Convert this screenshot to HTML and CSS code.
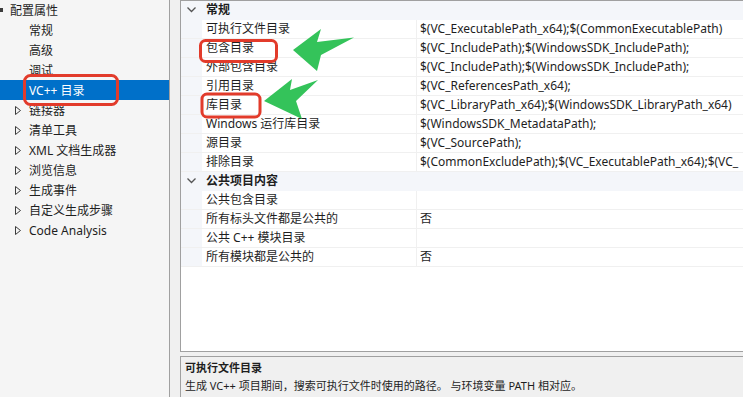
FILE: index.html
```html
<!DOCTYPE html>
<html>
<head>
    <title>VC++ 目录</title>
    <link rel="stylesheet" href="styles.css">
</head>
<body>
    <div class="layout">
        <div class="tree">
            <div class="node root"><span class="open-mark"></span>配置属性</div>
            <div class="node leaf">常规</div>
            <div class="node leaf">高级</div>
            <div class="node leaf">调试</div>
            <div class="node leaf sel">VC++ 目录</div>
            <div class="node"><svg class="twist" width="6" height="9" viewBox="0 0 6 9"><polygon points="0.5,0.5 5.5,4.5 0.5,8.5" /></svg>链接器</div>
            <div class="node"><svg class="twist" width="6" height="9" viewBox="0 0 6 9"><polygon points="0.5,0.5 5.5,4.5 0.5,8.5" /></svg>清单工具</div>
            <div class="node"><svg class="twist" width="6" height="9" viewBox="0 0 6 9"><polygon points="0.5,0.5 5.5,4.5 0.5,8.5" /></svg>XML 文档生成器</div>
            <div class="node"><svg class="twist" width="6" height="9" viewBox="0 0 6 9"><polygon points="0.5,0.5 5.5,4.5 0.5,8.5" /></svg>浏览信息</div>
            <div class="node"><svg class="twist" width="6" height="9" viewBox="0 0 6 9"><polygon points="0.5,0.5 5.5,4.5 0.5,8.5" /></svg>生成事件</div>
            <div class="node"><svg class="twist" width="6" height="9" viewBox="0 0 6 9"><polygon points="0.5,0.5 5.5,4.5 0.5,8.5" /></svg>自定义生成步骤</div>
            <div class="node"><svg class="twist" width="6" height="9" viewBox="0 0 6 9"><polygon points="0.5,0.5 5.5,4.5 0.5,8.5" /></svg>Code Analysis</div>
        </div>

        <div class="main">
            <div class="grid">
                <div class="row cat">
                    <span class="gut"><svg width="9" height="6" viewBox="0 0 9 6"><polyline points="0.5,0.5 4.5,4.5 8.5,0.5" /></svg></span>
                    <span class="name">常规</span>
                </div>
                <div class="row"><span class="gut"></span><span class="name">可执行文件目录</span><span class="val">$(VC_ExecutablePath_x64);$(CommonExecutablePath)</span></div>
                <div class="row"><span class="gut"></span><span class="name">包含目录</span><span class="val">$(VC_IncludePath);$(WindowsSDK_IncludePath);</span></div>
                <div class="row"><span class="gut"></span><span class="name">外部包含目录</span><span class="val">$(VC_IncludePath);$(WindowsSDK_IncludePath);</span></div>
                <div class="row"><span class="gut"></span><span class="name">引用目录</span><span class="val">$(VC_ReferencesPath_x64);</span></div>
                <div class="row"><span class="gut"></span><span class="name">库目录</span><span class="val">$(VC_LibraryPath_x64);$(WindowsSDK_LibraryPath_x64)</span></div>
                <div class="row"><span class="gut"></span><span class="name">Windows 运行库目录</span><span class="val">$(WindowsSDK_MetadataPath);</span></div>
                <div class="row"><span class="gut"></span><span class="name">源目录</span><span class="val">$(VC_SourcePath);</span></div>
                <div class="row"><span class="gut"></span><span class="name">排除目录</span><span class="val">$(CommonExcludePath);$(VC_ExecutablePath_x64);$(VC_</span></div>
                <div class="row cat">
                    <span class="gut"><svg width="9" height="6" viewBox="0 0 9 6"><polyline points="0.5,0.5 4.5,4.5 8.5,0.5" /></svg></span>
                    <span class="name">公共项目内容</span>
                </div>
                <div class="row"><span class="gut"></span><span class="name">公共包含目录</span><span class="val"></span></div>
                <div class="row"><span class="gut"></span><span class="name">所有标头文件都是公共的</span><span class="val">否</span></div>
                <div class="row"><span class="gut"></span><span class="name">公共 C++ 模块目录</span><span class="val"></span></div>
                <div class="row"><span class="gut"></span><span class="name">所有模块都是公共的</span><span class="val">否</span></div>
            </div>

            <div class="desc">
                <div class="desc-title">可执行文件目录</div>
                <div class="desc-text">生成 VC++ 项目期间，搜索可执行文件时使用的路径。 与环境变量 PATH 相对应。</div>
            </div>
        </div>

        <!-- 标注：红框和绿色箭头 -->
        <svg class="marks" width="743" height="397" viewBox="0 0 743 397">
            <rect class="box" x="24.5" y="75.5" width="93" height="29" rx="6" />
            <rect class="box" x="200.5" y="40.5" width="76" height="21" rx="5" />
            <rect class="box" x="202" y="94" width="58" height="23" rx="5" />
            <polygon class="arrow" points="293,50 321,29 317,42 354,37.5 321,55 317,71" />
            <polygon class="arrow" points="264,101 292,79 290,90 318,80 296,101 302,119" />
        </svg>
    </div>
</body>
</html>
```

FILE: styles.css
```css
body {
    margin: 0;
    background: #f0f0f0;
    font-family: 'Noto Sans', 'Noto Sans CJK SC', sans-serif;
    font-size: 12px;
    color: #1e1e1e;
}
.layout {
    position: relative;
    display: flex;
    width: 743px;
    height: 397px;
    overflow: hidden;
}
.tree {
    width: 169px;
    flex-shrink: 0;
    background: #f5f5f5;
    border-right: 1px solid #a0a0a0;
}
.node {
    height: 20px;
    display: flex;
    align-items: center;
    padding-left: 15px;
    white-space: nowrap;
}
.node.root {
    padding-left: 0;
}
.open-mark {
    width: 3px;
    height: 4px;
    background: #3c3c3c;
    margin-right: 7px;
}
.node.leaf {
    padding-left: 29px;
}
.node.sel {
    background: #0070c9;
    color: #ffffff;
}
.twist {
    margin-right: 8px;
}
.twist polygon {
    fill: none;
    stroke: #3c3c3c;
    stroke-width: 1;
}
.main {
    margin-left: 10px;
    display: flex;
    flex-direction: column;
    flex-shrink: 0;
    width: 620px;
}
.grid {
    height: 357px;
    box-sizing: border-box;
    border: 1px solid #a0a0a0;
    background: #ffffff;
}
.row {
    display: flex;
    height: 19px;
    box-sizing: border-box;
    border-bottom: 1px solid #f0f0f0;
    line-height: 18px;
    white-space: nowrap;
}
.gut {
    width: 21px;
    flex-shrink: 0;
    background: #f4f6fa;
    display: flex;
    align-items: center;
    justify-content: center;
}
.gut polyline {
    fill: none;
    stroke: #555555;
    stroke-width: 1.3;
}
.name {
    width: 214px;
    flex-shrink: 0;
    padding-left: 4px;
    box-sizing: border-box;
}
.val {
    flex: 1;
    border-left: 1px solid #f0f0f0;
    padding-left: 3px;
    overflow: hidden;
}
.row.cat {
    background: #f4f6fa;
    border-bottom-color: #f4f6fa;
}
.row.cat .name {
    font-weight: bold;
}
.desc {
    margin-top: 4px;
    flex: 1;
    border-top: 1px solid #a0a0a0;
    border-left: 1px solid #a0a0a0;
    padding: 2px 4px;
    font-size: 11px;
    line-height: 18px;
    white-space: nowrap;
}
.desc-title {
    font-weight: bold;
}
.marks {
    position: absolute;
    left: 0;
    top: 0;
    pointer-events: none;
}
.box {
    fill: none;
    stroke: #e23b2b;
    stroke-width: 3;
}
.arrow {
    fill: #34c35a;
}
```
